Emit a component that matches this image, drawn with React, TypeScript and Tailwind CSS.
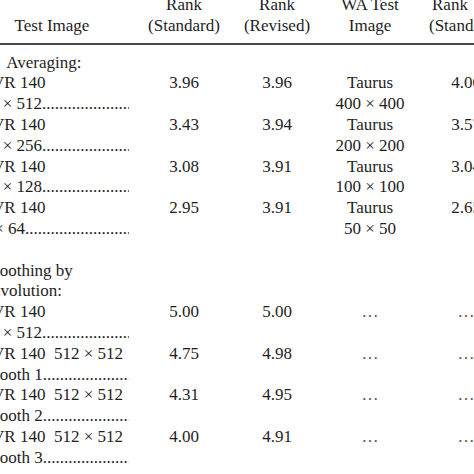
import type { ReactNode } from "react";

type Row = {
  stub: ReactNode[];
  std?: string;
  rev?: string;
  wa?: string[];
  std2?: string;
};

const LEADER = ".".repeat(80);

function Lead({ text, pad }: { text: string; pad: string }) {
  return (
    <div className={`flex whitespace-nowrap pr-[11px] ${pad}`}>
      <span>{text}</span>
      <span className="min-w-0 flex-1 overflow-hidden">{LEADER}</span>
    </div>
  );
}

const avr = (n: string, std: string, rev: string, wa: string, std2: string): Row => ({
  stub: [
    <div key="a" className="whitespace-nowrap pl-[42px]">AVR 140</div>,
    <Lead key="b" text={`${n} × ${n}`} pad="pl-[33px]" />,
  ],
  std,
  rev,
  wa: ["Taurus", wa],
  std2,
});

const smooth = (k: string, std: string, rev: string): Row => ({
  stub: [
    <div key="a" className="whitespace-pre pl-[42px]">{"AVR 140  512 × 512"}</div>,
    <Lead key="b" text={`smooth ${k}`} pad="pl-[40px]" />,
  ],
  std,
  rev,
  wa: ["…"],
  std2: "…",
});

const rows: Row[] = [
  { stub: [<div key="a" className="whitespace-pre pl-[20px]">{"Local  Averaging:"}</div>] },
  avr("512", "3.96", "3.96", "400 × 400", "4.00"),
  avr("256", "3.43", "3.94", "200 × 200", "3.57"),
  avr("128", "3.08", "3.91", "100 × 100", "3.04"),
  avr("64", "2.95", "3.91", "50 × 50", "2.65"),
  { stub: [<div key="a">&nbsp;</div>] },
  {
    stub: [
      <div key="a" className="whitespace-nowrap pl-[37px]">Smoothing by</div>,
      <div key="b" className="whitespace-nowrap pl-[36px]">convolution:</div>,
    ],
  },
  {
    stub: [
      <div key="a" className="whitespace-nowrap pl-[42px]">AVR 140</div>,
      <Lead key="b" text="512 × 512" pad="pl-[33px]" />,
    ],
    std: "5.00",
    rev: "5.00",
    wa: ["…"],
    std2: "…",
  },
  smooth("1", "4.75", "4.98"),
  smooth("2", "4.31", "4.95"),
  smooth("3", "4.00", "4.91"),
];

const cols = "grid grid-cols-[200px_88px_98px_88px_104px]";

export default function App() {
  return (
    <div
      className="h-[474px] w-[474px] overflow-hidden bg-white text-[17px] leading-[20.8px] text-[#1e1e1e]"
      style={{ fontFamily: '"Liberation Serif", "Times New Roman", serif' }}
    >
      <div className="ml-[-60px] mt-[-5px] w-[578px]">
        <div className={`${cols} items-end text-center`}>
          <div className="pl-[24px]">Test Image</div>
          <div>Rank<br />(Standard)</div>
          <div>Rank<br />(Revised)</div>
          <div>WA Test<br />Image</div>
          <div className="whitespace-nowrap pl-[15px] text-left">
            <div className="pl-[3px]">Rank</div>
            <div>(Standard)</div>
          </div>
        </div>
        <div className="mt-[6px] h-[2px] bg-[#4a4a4a]" />
        <div className="mt-[8px]">
          {rows.map((r, i) => (
            <div key={i} className={cols}>
              <div>{r.stub}</div>
              <div className="text-center">{r.std}</div>
              <div className="text-center">{r.rev}</div>
              <div className="text-center">
                {r.wa?.map((w, j) => (
                  <div key={j} className={w === "…" ? "text-[#555]" : ""}>{w}</div>
                ))}
              </div>
              <div className={`whitespace-nowrap text-center ${r.std2 === "…" ? "text-[#555]" : ""}`}>{r.std2}</div>
            </div>
          ))}
        </div>
      </div>
    </div>
  );
}
